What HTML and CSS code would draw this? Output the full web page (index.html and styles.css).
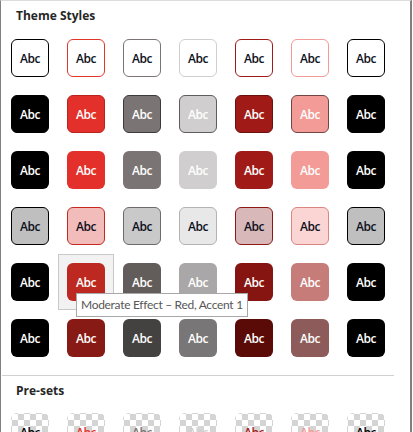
FILE: index.html
```html
<!DOCTYPE html>
<html>
<head>
<meta charset="utf-8">
<link rel="stylesheet" href="styles.css">
</head>
<body>
<div class="panel">
  <div class="section-title">Theme Styles</div>
  <div class="rows">
    <div class="row outline"><div class="tile">Abc</div><div class="tile">Abc</div><div class="tile">Abc</div><div class="tile">Abc</div><div class="tile">Abc</div><div class="tile">Abc</div><div class="tile">Abc</div></div>
    <div class="row solid"><div class="tile">Abc</div><div class="tile">Abc</div><div class="tile">Abc</div><div class="tile">Abc</div><div class="tile">Abc</div><div class="tile">Abc</div><div class="tile">Abc</div></div>
    <div class="row flat"><div class="tile">Abc</div><div class="tile">Abc</div><div class="tile">Abc</div><div class="tile">Abc</div><div class="tile">Abc</div><div class="tile">Abc</div><div class="tile">Abc</div></div>
    <div class="row light"><div class="tile">Abc</div><div class="tile">Abc</div><div class="tile">Abc</div><div class="tile">Abc</div><div class="tile">Abc</div><div class="tile">Abc</div><div class="tile">Abc</div></div>
    <div class="row moderate"><div class="tile">Abc</div><div class="tile">Abc</div><div class="tile">Abc</div><div class="tile">Abc</div><div class="tile">Abc</div><div class="tile">Abc</div><div class="tile">Abc</div></div>
    <div class="row intense"><div class="tile">Abc</div><div class="tile">Abc</div><div class="tile">Abc</div><div class="tile">Abc</div><div class="tile">Abc</div><div class="tile">Abc</div><div class="tile">Abc</div></div>
  </div>
  <div class="sep"></div>
  <div class="section-title presets-title">Pre-sets</div>
  <div class="rows presets-rows">
    <div class="row presets"><div class="tile">Abc</div><div class="tile">Abc</div><div class="tile">Abc</div><div class="tile">Abc</div><div class="tile">Abc</div><div class="tile">Abc</div><div class="tile">Abc</div></div>
  </div>
  <div class="hover-box"><div class="tile hover-tile">Abc</div></div>
  <div class="tooltip">Moderate Effect – Red, Accent 1</div>
</div>
</body>
</html>
```

FILE: styles.css
```css
html, body {
  margin: 0;
  padding: 0;
  background: #ffffff;
}

.panel {
  position: relative;
  box-sizing: border-box;
  width: 412px;
  height: 432px;
  overflow: hidden;
  background: #ffffff;
  border-top: 1px solid #dcdcdc;
  border-left: 1px solid #808080;
  border-right: 2px solid #808080;
  font-family: "Open Sans", "Noto Sans", sans-serif;
}

.section-title {
  padding: 6px 0 0 15px;
  line-height: 18px;
  font-size: 12px;
  font-weight: 700;
  color: #262626;
}

.rows {
  display: flex;
  flex-direction: column;
  gap: 18px;
  margin-top: 14px;
  padding-left: 10px;
}

.row {
  display: flex;
  gap: 18px;
}

.tile {
  box-sizing: border-box;
  width: 38px;
  height: 38px;
  border-radius: 6px;
  display: flex;
  align-items: center;
  justify-content: center;
  font-size: 12px;
  font-weight: 600;
  letter-spacing: -0.5px;
  color: #ffffff;
  border: 1px solid transparent;
}

/* Row 1: outlines */
.outline .tile { background: #ffffff; color: #0c1020; }
.outline .tile:nth-child(1) { border-color: #000000; }
.outline .tile:nth-child(2) { border-color: #e3342a; }
.outline .tile:nth-child(3) { border-color: #7a7574; }
.outline .tile:nth-child(4) { border-color: #d0cece; }
.outline .tile:nth-child(5) { border-color: #a01b17; }
.outline .tile:nth-child(6) { border-color: #f29b97; }
.outline .tile:nth-child(7) { border-color: #000000; }

/* Row 2: solid with darker edge */
.solid .tile:nth-child(1) { background: #000000; border-color: #000000; }
.solid .tile:nth-child(2) { background: #e3302a; border-color: #b8231e; }
.solid .tile:nth-child(3) { background: #7a7574; border-color: #3c3a3a; }
.solid .tile:nth-child(4) { background: #d0cece; border-color: #5e5c5c; }
.solid .tile:nth-child(5) { background: #a01b17; border-color: #6a100d; }
.solid .tile:nth-child(6) { background: #f29b97; border-color: #6e4745; }
.solid .tile:nth-child(7) { background: #000000; border-color: #000000; }

/* Row 3: solid flat */
.flat .tile:nth-child(1) { background: #000000; }
.flat .tile:nth-child(2) { background: #e3302a; }
.flat .tile:nth-child(3) { background: #7a7574; }
.flat .tile:nth-child(4) { background: #d0cece; }
.flat .tile:nth-child(5) { background: #a01b17; }
.flat .tile:nth-child(6) { background: #f29b97; }
.flat .tile:nth-child(7) { background: #000000; }

/* Row 4: light fill with coloured outline */
.light .tile { color: #0c1020; }
.light .tile:nth-child(1) { background: #bfbfbf; border-color: #000000; }
.light .tile:nth-child(2) { background: #f2bcbb; border-color: #c4291f; }
.light .tile:nth-child(3) { background: #cac9c9; border-color: #6e6a69; }
.light .tile:nth-child(4) { background: #e8e8e8; border-color: #b4b2b2; }
.light .tile:nth-child(5) { background: #d8b8b8; border-color: #8c1713; }
.light .tile:nth-child(6) { background: #fad5d4; border-color: #d98581; }
.light .tile:nth-child(7) { background: #bfbfbf; border-color: #000000; }

/* Row 5: moderate */
.moderate .tile:nth-child(1) { background: #000000; }
.moderate .tile:nth-child(2) { background: #bd2820; }
.moderate .tile:nth-child(3) { background: #625d5b; }
.moderate .tile:nth-child(4) { background: #a9a7a7; }
.moderate .tile:nth-child(5) { background: #861511; }
.moderate .tile:nth-child(6) { background: #c67c79; }
.moderate .tile:nth-child(7) { background: #000000; }

/* Row 6: intense */
.intense .tile:nth-child(1) { background: #000000; }
.intense .tile:nth-child(2) { background: #871a14; }
.intense .tile:nth-child(3) { background: #434240; }
.intense .tile:nth-child(4) { background: #787676; }
.intense .tile:nth-child(5) { background: #5a0b08; }
.intense .tile:nth-child(6) { background: #8d5b59; }
.intense .tile:nth-child(7) { background: #000000; }

.sep {
  margin: 18px 0 0 1px;
  width: 392px;
  height: 1px;
  background: #d0d0d0;
}

.presets-rows {
  margin-top: 13px;
}

.presets .tile {
  background-color: #ffffff;
  background-image: conic-gradient(#d4d4d4 25%, #ffffff 0 50%, #d4d4d4 0 75%, #ffffff 0);
  background-size: 12px 12px;
}
.presets .tile:nth-child(1) { color: #000000; }
.presets .tile:nth-child(2) { color: #e3302a; }
.presets .tile:nth-child(3) { color: #7a7574; }
.presets .tile:nth-child(4) { color: #d0cece; }
.presets .tile:nth-child(5) { color: #a01b17; }
.presets .tile:nth-child(6) { color: #f29b97; }
.presets .tile:nth-child(7) { color: #000000; }

.hover-box {
  position: absolute;
  left: 57px;
  top: 253px;
  box-sizing: border-box;
  width: 56px;
  height: 56px;
  border: 1px solid #c8c8c8;
  background: #f2f2f2;
  display: flex;
  align-items: center;
  justify-content: center;
}

.hover-tile {
  background: #bd2820;
}

.tooltip {
  position: absolute;
  left: 75px;
  top: 292px;
  box-sizing: border-box;
  height: 24px;
  padding: 0 4px;
  border: 1px solid #a8a8a8;
  background: #ffffff;
  color: #575757;
  font-family: "Lato", "Open Sans", sans-serif;
  font-size: 12px;
  letter-spacing: -0.3px;
  line-height: 22px;
  white-space: nowrap;
}
```
